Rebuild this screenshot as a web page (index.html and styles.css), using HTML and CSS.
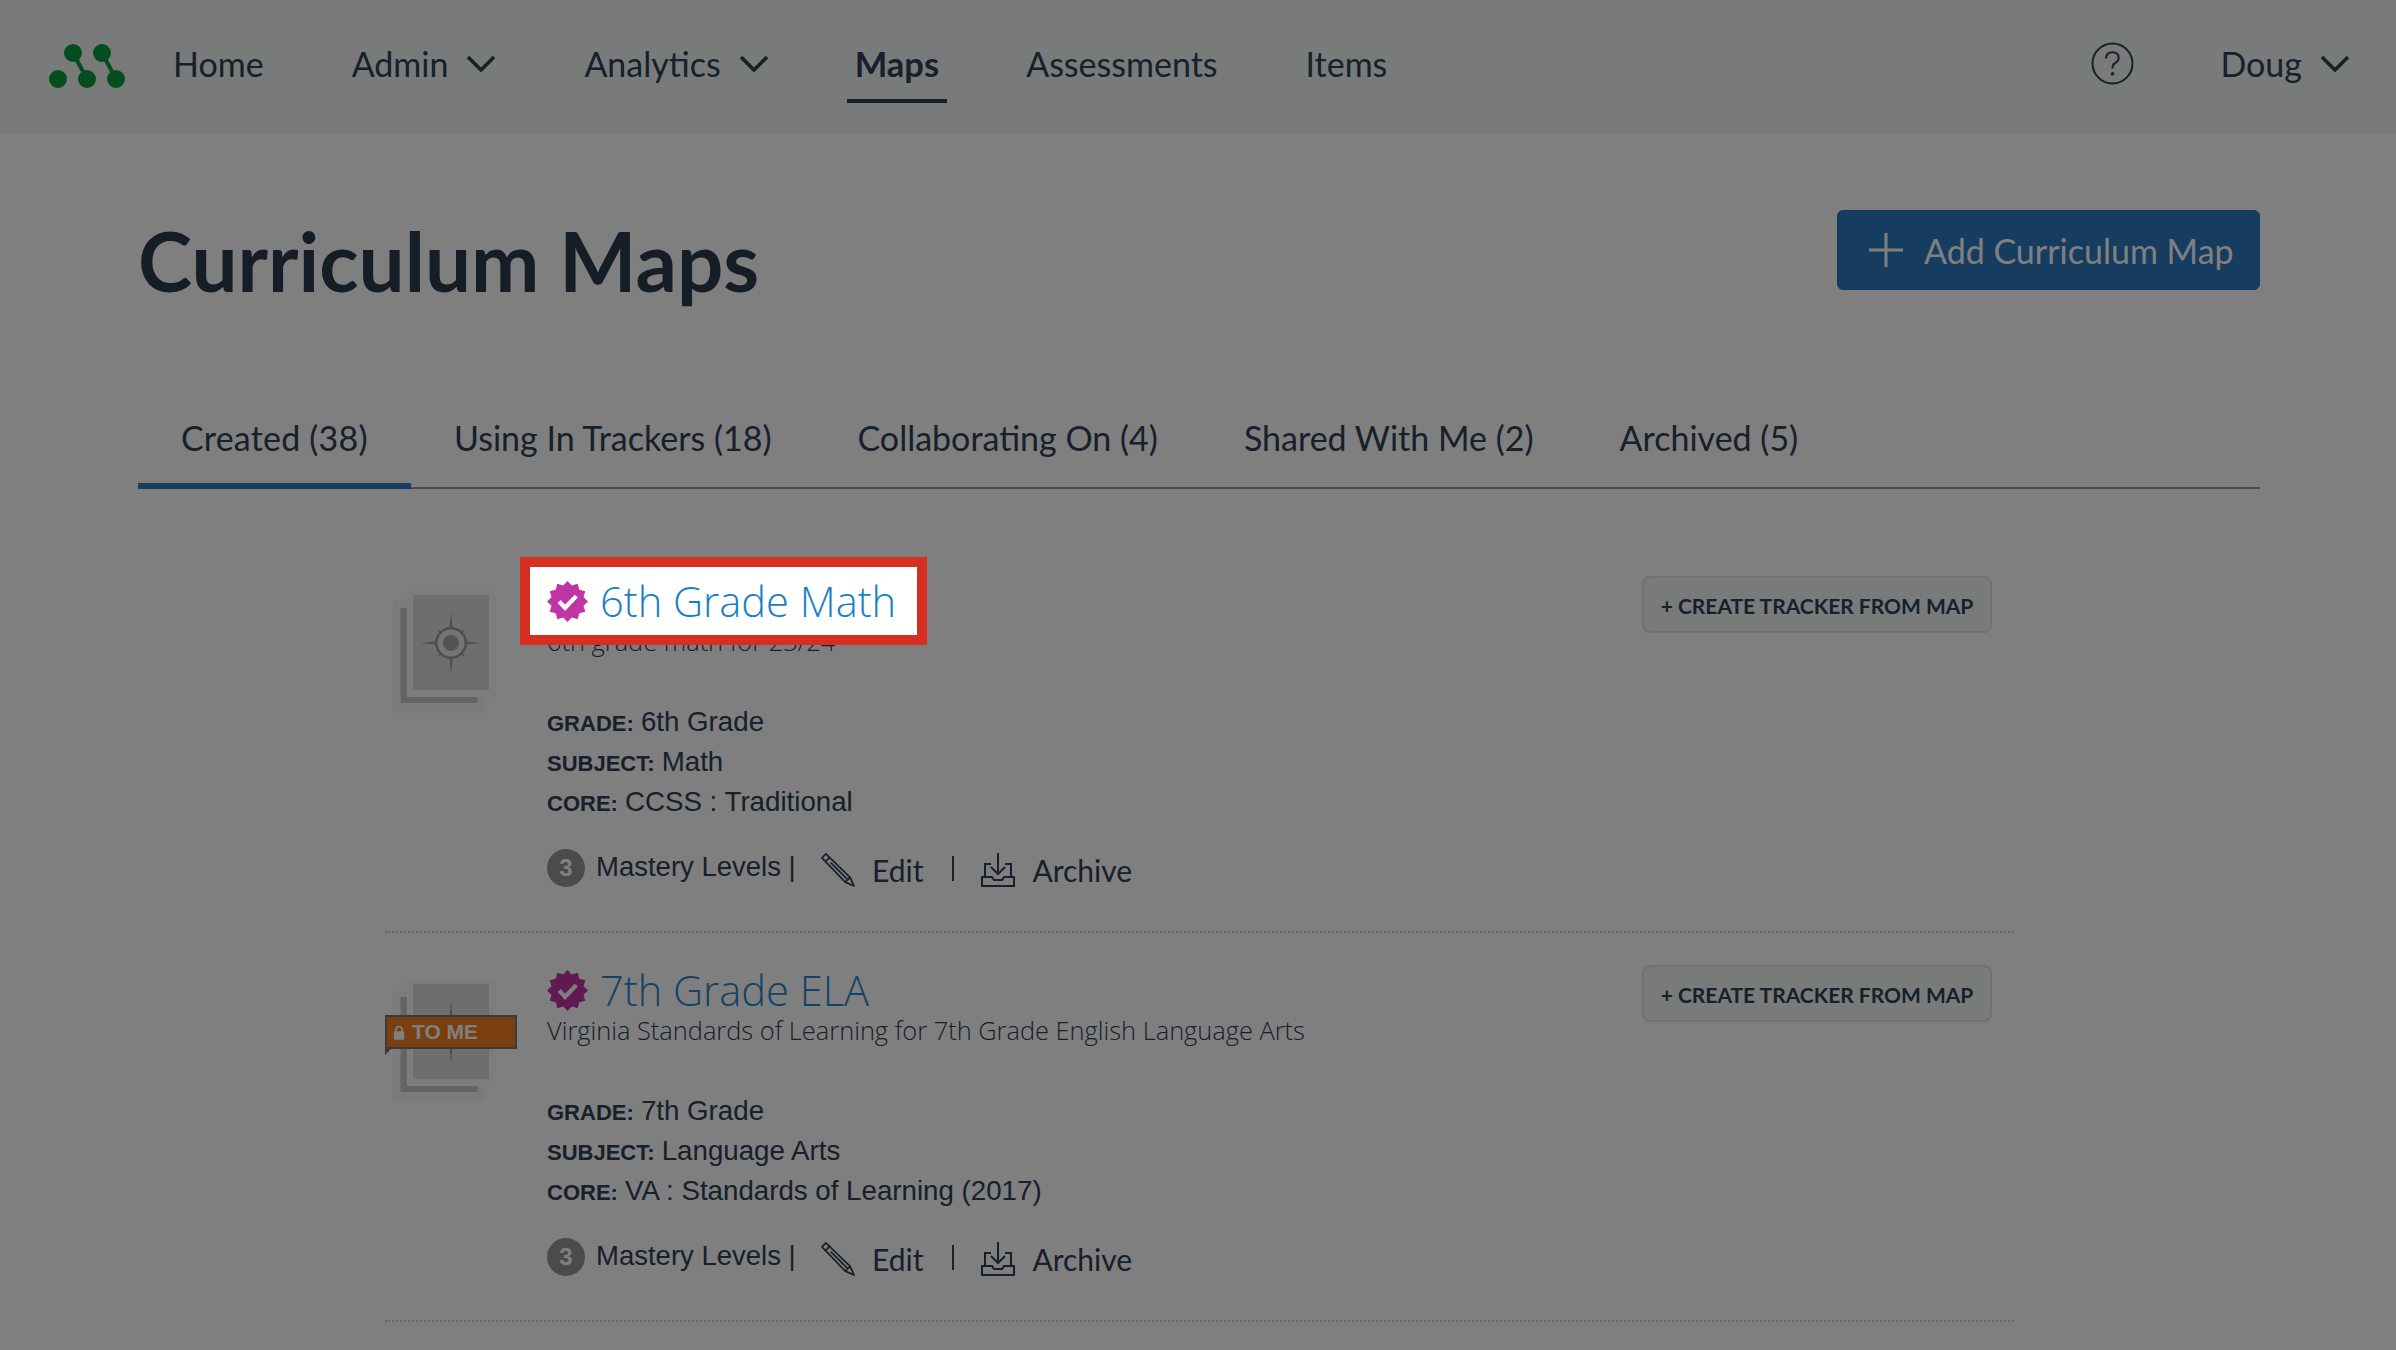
FILE: index.html
```html
<!DOCTYPE html>
<html lang="en">
<head>
<meta charset="utf-8">
<title>Curriculum Maps</title>
<link rel="stylesheet" href="styles.css">
</head>
<body>
<svg class="defs" width="0" height="0" aria-hidden="true">
  <symbol id="chev" viewBox="0 0 30 17"><path d="M2 2 L15 15 L28 2" fill="none" stroke="currentColor" stroke-width="3.6"/></symbol>
  <symbol id="badge" viewBox="0 0 42 42"><polygon fill="currentColor" points="21,0 25.4,4.58 31.5,2.81 33.02,8.98 39.19,10.5 37.42,16.6 42,21 37.42,25.4 39.19,31.5 33.02,33.02 31.5,39.19 25.4,37.42 21,42 16.6,37.42 10.5,39.19 8.98,33.02 2.81,31.5 4.58,25.4 0,21 4.58,16.6 2.81,10.5 8.98,8.98 10.5,2.81 16.6,4.58"/><polyline points="12.5,21 18.5,27.5 30,15.5" fill="none" stroke="#fff" stroke-width="4.4"/></symbol>
  <symbol id="pencil" viewBox="0 0 35 35"><g fill="none" stroke="currentColor" stroke-width="1.8" stroke-linejoin="round"><path d="M1 5 L5 1 L30 25 L34 34 L25 30 Z"/><path d="M4.5 9 L9 4.5"/><path d="M10 10 L27 27"/><path d="M30 25 L25 30"/></g></symbol>
  <symbol id="archive" viewBox="0 0 34 34"><g fill="none" stroke="currentColor" stroke-width="2"><path d="M17 0 V21 M10 14 L17 21 L24 14"/><path d="M10 11 H4 V24 M24 11 H30 V24"/><path d="M1 24 H11 L13 27 H21 L23 24 H33 V33 H1 Z"/></g></symbol>
  <symbol id="thumb" viewBox="0 0 105 130">
    <rect x="0" y="18" width="92" height="112" fill="#f6f6f6"/>
    <rect x="7.5" y="25" width="77" height="95" fill="#c8c8c8"/>
    <rect x="14" y="7" width="89" height="107" fill="#fbfbfb"/>
    <rect x="20" y="12" width="76" height="95" fill="#dcdcdc"/>
    <g fill="#9c9c9c">
      <polygon points="58,29 61,60 58,91 55,60"/>
      <polygon points="27,60 58,57 89,60 58,63"/>
      <polygon points="44,46 61,57 72,74 55,63"/>
      <polygon points="72,46 61,63 44,74 55,57"/>
      <circle cx="58" cy="60" r="16"/>
    </g>
    <circle cx="58" cy="60" r="13.5" fill="#e8e8e8"/>
    <circle cx="58" cy="60" r="8" fill="#a8a8a8"/>
  </symbol>
</svg>

<header class="nav">
  <svg class="logo" viewBox="0 0 76 44" width="76" height="44" aria-label="Logo">
    <g stroke="#0a9a3c" stroke-width="4"><line x1="24" y1="9" x2="38" y2="35"/><line x1="53" y1="9" x2="67" y2="35"/></g>
    <g fill="#0a9a3c"><circle cx="24" cy="9" r="9"/><circle cx="53" cy="9" r="9"/><circle cx="9" cy="35" r="9"/><circle cx="38" cy="35" r="9"/><circle cx="67" cy="35" r="9"/></g>
  </svg>
  <nav class="links">
    <a class="link">Home</a>
    <a class="link">Admin <svg class="chev"><use href="#chev"/></svg></a>
    <a class="link">Analytics <svg class="chev"><use href="#chev"/></svg></a>
    <a class="link active">Maps</a>
    <a class="link">Assessments</a>
    <a class="link">Items</a>
  </nav>
  <div class="nav-right">
    <svg class="help" viewBox="0 0 42 42" aria-label="Help"><circle cx="21" cy="21" r="19.5" fill="none" stroke="currentColor" stroke-width="2"/><path d="M14.5 16 Q15 10 21 10 Q27 10 27 15.5 Q27 19 23 21 Q21 22 21 26" fill="none" stroke="currentColor" stroke-width="2"/><circle cx="21" cy="31" r="1.8" fill="currentColor"/></svg>
    <a class="link">Doug <svg class="chev"><use href="#chev"/></svg></a>
  </div>
</header>

<main class="page">
  <div class="head">
    <h1>Curriculum Maps</h1>
    <button class="add"><svg class="plus" viewBox="0 0 34 34"><path d="M17 0 V34 M0 17 H34" stroke="currentColor" stroke-width="3"/></svg>Add Curriculum Map</button>
  </div>

  <div class="tabs">
    <a class="tab on">Created (38)</a>
    <a class="tab">Using In Trackers (18)</a>
    <a class="tab">Collaborating On (4)</a>
    <a class="tab">Shared With Me (2)</a>
    <a class="tab">Archived (5)</a>
  </div>

  <section class="list">
    <article class="row">
      <div class="thumb"><svg class="thumb-img"><use href="#thumb"/></svg></div>
      <div class="body">
        <h2 class="title highlight"><svg class="badge"><use href="#badge"/></svg>6th Grade Math</h2>
        <p class="sub">6th grade math for 23/24</p>
        <dl class="meta">
          <div><dt>GRADE:</dt> <dd>6th Grade</dd></div>
          <div><dt>SUBJECT:</dt> <dd>Math</dd></div>
          <div><dt>CORE:</dt> <dd>CCSS : Traditional</dd></div>
        </dl>
        <div class="actions">
          <span class="count">3</span><span class="levels">Mastery Levels |</span>
          <svg class="ic pencil"><use href="#pencil"/></svg><a class="act">Edit</a>
          <span class="sep"></span>
          <svg class="ic"><use href="#archive"/></svg><a class="act">Archive</a>
        </div>
      </div>
      <button class="tracker">+ CREATE TRACKER FROM MAP</button>
    </article>

    <article class="row">
      <div class="thumb"><svg class="thumb-img"><use href="#thumb"/></svg>
        <span class="ribbon"><svg class="lock" viewBox="0 0 14 17"><path d="M3.5 8 V5 a3.5 3.5 0 0 1 7 0 V8" fill="none" stroke="currentColor" stroke-width="2"/><rect x="1" y="7" width="12" height="10" rx="1" fill="currentColor"/></svg>TO ME</span>
      </div>
      <div class="body">
        <h2 class="title"><svg class="badge"><use href="#badge"/></svg>7th Grade ELA</h2>
        <p class="sub">Virginia Standards of Learning for 7th Grade English Language Arts</p>
        <dl class="meta">
          <div><dt>GRADE:</dt> <dd>7th Grade</dd></div>
          <div><dt>SUBJECT:</dt> <dd>Language Arts</dd></div>
          <div><dt>CORE:</dt> <dd>VA : Standards of Learning (2017)</dd></div>
        </dl>
        <div class="actions">
          <span class="count">3</span><span class="levels">Mastery Levels |</span>
          <svg class="ic pencil"><use href="#pencil"/></svg><a class="act">Edit</a>
          <span class="sep"></span>
          <svg class="ic"><use href="#archive"/></svg><a class="act">Archive</a>
        </div>
      </div>
      <button class="tracker">+ CREATE TRACKER FROM MAP</button>
    </article>
  </section>
</main>

<div class="scrim"></div>
</body>
</html>
```
FILE: styles.css
```css
* { box-sizing: border-box; }
html, body { margin: 0; height: 100%; overflow: hidden; }
body { background: #fff; color: #2e4056; font-family: Lato, sans-serif; }
.defs { position: absolute; }

.scrim { position: fixed; inset: 0; background: rgba(0, 0, 0, .5); z-index: 10; }

.nav { display: flex; align-items: center; height: 134px; padding: 0 46px 6px 49px; background: #f2f6f5; border-bottom: 1px solid #eef1f0; }
.logo { display: block; flex: none; margin-top: 5px; }
.links { display: flex; align-items: center; gap: 88px; margin-left: 48px; }
.link { position: relative; display: inline-flex; align-items: center; gap: 18px; font-size: 34px; line-height: 44px; white-space: nowrap; }
.chev { width: 30px; height: 17px; flex: none; }
.active { font-weight: 700; margin-left: -2px; margin-right: -1px; font-size: 34.5px; }
.active::after { content: ""; position: absolute; left: -8px; right: -8px; bottom: -17px; height: 4px; background: #2e4056; }
.nav-right { display: flex; align-items: center; gap: 86px; margin-left: auto; }
.help { width: 43px; height: 43px; display: block; }

.page { padding: 0 136px 0 138px; }
.head { display: flex; justify-content: space-between; align-items: flex-start; height: 282px; padding-top: 76px; }
h1 { margin: -5px 0 0; font-size: 81.7px; line-height: 110px; font-weight: 700; color: #2a3a4c; }
.add { display: flex; align-items: center; gap: 21px; width: 423px; height: 80px; padding: 0 0 0 31px; border: 1px solid #2a70b0; border-radius: 6px; background: #2c78be; color: #fff; font: 34px Lato, sans-serif; }
.plus { width: 34px; height: 34px; flex: none; }

.tabs { display: flex; height: 73px; border-bottom: 2px solid #8f979e; }
.tab { height: 73px; padding: 0 43px; font-size: 34px; line-height: 44px; white-space: nowrap; }
.tab.on { width: 273px; border-bottom: 6px solid #2c78be; letter-spacing: .2px; }

.list { margin: 55px 0 0 247px; width: 1629px; }
.row { display: flex; height: 389px; border-bottom: 2px dotted #c6c6c6; }
.thumb { position: relative; flex: none; width: 162px; }
.thumb-img { position: absolute; left: 8px; top: 39px; width: 105px; height: 130px; }
.ribbon { position: absolute; left: 0; top: 82px; display: flex; align-items: center; gap: 7px; width: 132px; height: 34px; padding-left: 6px; background: #f47f20; border: 2px solid #7c7570; color: #fff; font: 700 21px "Liberation Sans", sans-serif; }
.ribbon::after { content: ""; position: absolute; left: -2px; top: 32px; border-left: 6px solid #7c7570; border-bottom: 6px solid transparent; }
.lock { width: 12px; height: 15px; flex: none; }
.body { display: flex; flex-direction: column; align-items: flex-start; flex: 1; min-width: 0; padding-top: 24px; }
.title { display: flex; align-items: center; gap: 12px; height: 66px; margin: 0; font: 300 41.6px/66px "Open Sans", sans-serif; color: #2a86cc; white-space: nowrap; }
.badge { width: 41px; height: 41px; flex: none; color: #c035a5; }
.highlight { position: relative; z-index: 20; width: 407px; height: 88px; margin: -11px 0 -11px -27px; padding-left: 17px; background: #fff; border: 10px solid #d62e20; color: #1a80c4; }
.sub { margin: -10px 0 0; font: 300 25.4px/34px "Open Sans", sans-serif; color: #2e4056; white-space: nowrap; }
.meta { margin: 44px 0 0; }
.meta div { height: 40px; line-height: 40px; white-space: nowrap; }
.meta dt, .meta dd { display: inline; margin: 0; font-family: "Liberation Sans", sans-serif; }
.meta dt { font-size: 22px; font-weight: 700; margin-right: 3px; }
.meta dd { font-size: 27.7px; }
.actions { display: flex; align-items: center; height: 40px; margin-top: 26px; white-space: nowrap; }
.count { display: flex; align-items: center; justify-content: center; width: 38px; height: 38px; border-radius: 50%; background: #969696; color: #fff; font: 700 24px "Liberation Sans", sans-serif; margin-right: 11px; }
.levels { font: 27.5px "Liberation Sans", sans-serif; width: 225px; margin-top: -2px; }
.ic { width: 34px; height: 34px; flex: none; margin-top: 3px; }
.act { font: 30px Lato, sans-serif; margin: 3px 0 0 17px; }
.sep { width: 2px; height: 25px; background: #2e4056; margin: 0 27px 0 29px; }
.tracker { flex: none; align-self: flex-start; width: 350px; height: 57px; margin: 32px 22px 0 0; padding: 2px 0 0; background: #f2f6f5; border: 2px solid #dfe4e3; border-radius: 8px; color: #2e4056; font: 700 21px Lato, sans-serif; }
```
